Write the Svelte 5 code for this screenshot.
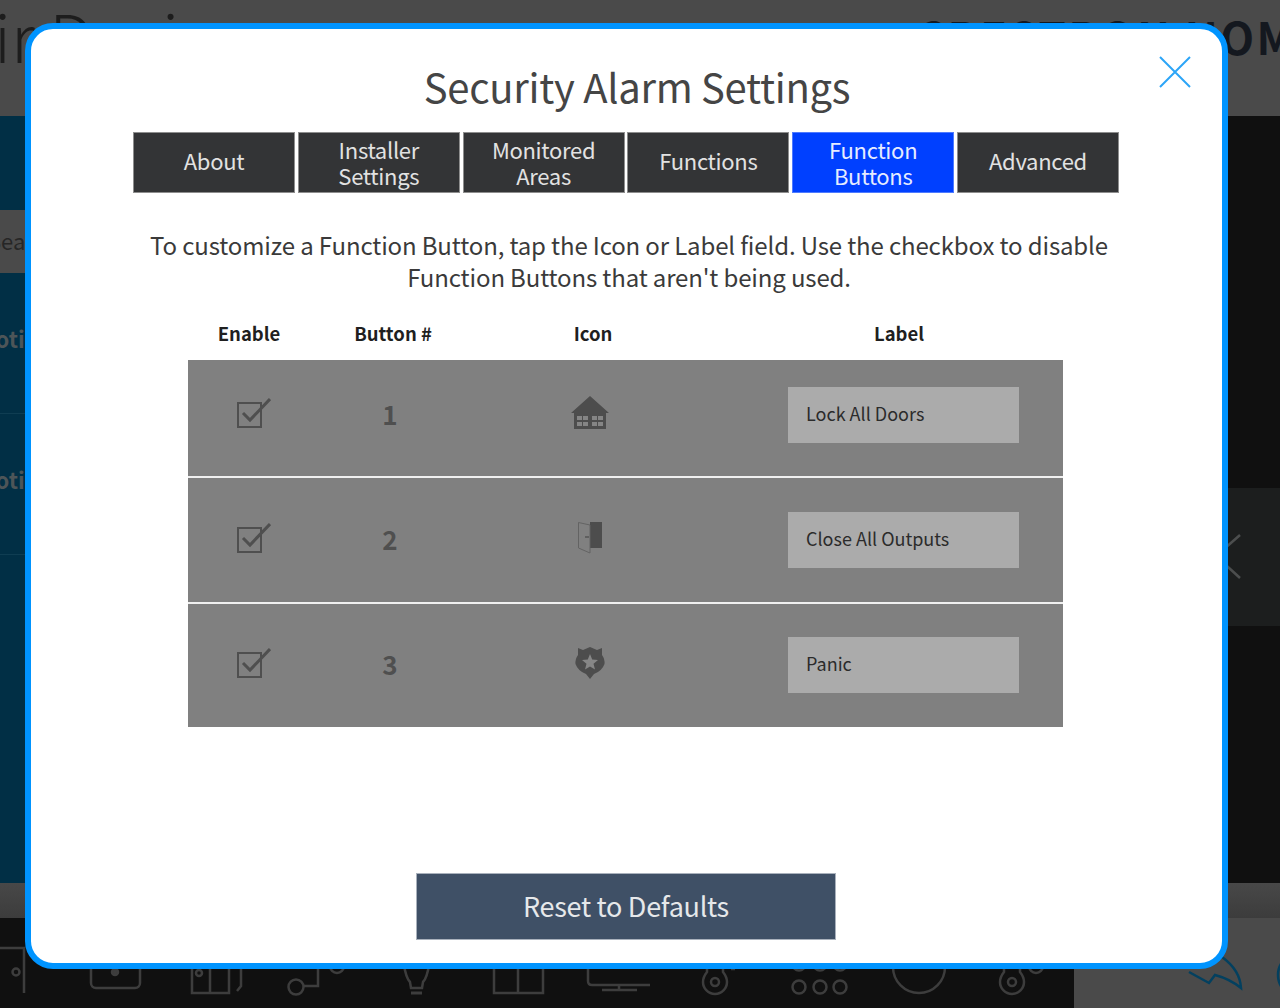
<script>
  const tabs = [
    ['About'],
    ['Installer', 'Settings'],
    ['Monitored', 'Areas'],
    ['Functions'],
    ['Function', 'Buttons'],
    ['Advanced']
  ];
  const rows = [
    { num: 1, icon: 'house', label: 'Lock All Doors' },
    { num: 2, icon: 'door', label: 'Close All Outputs' },
    { num: 3, icon: 'badge', label: 'Panic' }
  ];
</script>

<div class="page">
  <header class="top">
    <span class="heading">ir Devices</span>
    <span class="brand">CRESTRON HOME</span>
  </header>

  <div class="middle">
    <aside class="side">
      <div class="search"><span>Search</span></div>
      <div class="side-item"><span>Notices</span></div>
      <div class="side-item"><span>Notices</span></div>
    </aside>
    <div class="content">
      <div class="pager">
        <svg width="52" height="138" viewBox="0 0 52 138" fill="none" stroke="#4c4e4e" stroke-width="2.5">
          <path d="M12 47 L-12 68 L12 90" />
        </svg>
      </div>
    </div>
  </div>

  <div class="strip"></div>

  <footer class="bottom">
    <nav class="dock">
      <svg width="1074" height="90" viewBox="0 918 1074 90" fill="none" stroke="#3d3d3d" stroke-width="2.5">
        <path d="M0 948 H24 V993" /><circle cx="16" cy="972" r="3.5" />
        <rect x="91" y="950" width="49" height="38" rx="5" /><circle cx="115" cy="972" r="3" fill="#3d3d3d" />
        <path d="M192 950 V993 H229 V950 M210 950 V993 M241 960 V986 L237 991" /><circle cx="199" cy="973" r="3" />
        <circle cx="296" cy="987" r="7.5" /><path d="M304 986 H318 V960" /><circle cx="337" cy="966" r="7" />
        <path d="M404 965 Q406 978 410 982 L411 988 H422 L423 982 Q427 978 429 965" /><path d="M411 993 H422" stroke-width="3" />
        <path d="M494 950 V993 H543 V950 M518 950 V993" />
        <path d="M588 950 V981 Q588 985 592 985 H650 M619 985 V990 M602 990 H637" />
        <path d="M707 960 V972 Q703 977 703 982 A12 12 0 0 0 727 982 Q727 977 723 972 V960" /><circle cx="715" cy="982" r="4" /><path d="M731 969 H735" />
        <circle cx="799" cy="987" r="6.5" /><circle cx="820" cy="987" r="6.5" /><circle cx="840" cy="987" r="6.5" />
        <circle cx="799" cy="964" r="6.5" /><circle cx="820" cy="964" r="6.5" /><circle cx="840" cy="964" r="6.5" />
        <circle cx="919" cy="967" r="26" />
        <path d="M1004 960 V972 Q1000 977 1000 982 A12 12 0 0 0 1024 982 Q1024 977 1020 972 V960" /><circle cx="1012" cy="982" r="4" /><circle cx="1036" cy="966" r="7" />
      </svg>
    </nav>
    <div class="logo">
      <svg width="206" height="90" viewBox="1074 918 206 90" fill="none" stroke="#03405f" stroke-width="2.5">
        <path d="M1189 972 L1209 983 L1215 975 Q1230 979 1241 988 Q1240 970 1222 957" />
        <circle cx="1300" cy="975" r="22" />
      </svg>
    </div>
  </footer>

  <div class="modal">
    <button class="close" aria-label="Close">
      <svg width="32" height="32" viewBox="0 0 32 32" fill="none" stroke="#2ca5f7" stroke-width="2">
        <path d="M1 1 L31 31 M31 1 L1 31" />
      </svg>
    </button>
    <h1>Security Alarm Settings</h1>

    <div class="tabs">
      {#each tabs as tab, i}
        <div class="tab" class:active={i === 4}>
          {#each tab as line}<span>{line}</span>{/each}
        </div>
      {/each}
    </div>

    <p class="intro">
      To customize a Function Button, tap the Icon or Label field. Use the checkbox to disable<br />
      Function Buttons that aren't being used.
    </p>

    <div class="table">
      <div class="head">
        <span>Enable</span>
        <span>Button #</span>
        <span>Icon</span>
        <span class="head-label">Label</span>
      </div>
      {#each rows as row}
        <div class="row">
          <div class="cell check">
            <svg width="34" height="30" viewBox="0 0 34 30" fill="none" stroke="#4f4f4f">
              <rect x="1" y="5" width="23" height="24" stroke-width="2" />
              <path d="M6 15 L13 22 L33 1" stroke-width="3" />
            </svg>
          </div>
          <div class="cell num">{row.num}</div>
          <div class="cell icon">
            {#if row.icon === 'house'}
              <svg width="40" height="33" viewBox="0 0 40 33" fill="#4d4d4d">
                <path d="M20 0 L39 17 H36 V33 H4 V17 H1 Z" />
                <g fill="#858585">
                  <rect x="7" y="20" width="5" height="4" /><rect x="13" y="20" width="5" height="4" />
                  <rect x="7" y="26" width="5" height="4" /><rect x="13" y="26" width="5" height="4" />
                  <rect x="22" y="20" width="5" height="4" /><rect x="28" y="20" width="5" height="4" />
                  <rect x="22" y="26" width="5" height="4" /><rect x="28" y="26" width="5" height="4" />
                </g>
              </svg>
            {:else if row.icon === 'door'}
              <svg width="24" height="32" viewBox="0 0 24 32" fill="none">
                <rect x="12" y="0" width="12" height="26" fill="#4d4d4d" />
                <path d="M.5 .5 L12 3 V31 L.5 26 Z" fill="#808080" stroke="#636363" stroke-width="1" />
                <path d="M7 15 H11" stroke="#555" stroke-width="1.5" />
              </svg>
            {:else}
              <svg width="30" height="32" viewBox="0 0 30 32" fill="#4d4d4d">
                <path d="M3 1 L8 3 L15 0 L22 3 L27 1 L27 8 Q30 12 29.5 17 Q27 24 19 27 L15 32 L11 27 Q3 24 .5 17 Q0 12 3 8 Z" />
                <path fill="#878787" d="M15 7 L17.2 12.6 L23 13 L18.5 16.8 L20 22.5 L15 19.4 L10 22.5 L11.5 16.8 L7 13 L12.8 12.6 Z" />
              </svg>
            {/if}
          </div>
          <div class="cell field"><div class="input">{row.label}</div></div>
        </div>
      {/each}
    </div>

    <button class="reset">Reset to Defaults</button>
  </div>
</div>

<style>
  :global(body) {
    margin: 0;
    font-family: "Noto Sans CJK SC", "Noto Sans", sans-serif;
  }

  .page {
    position: relative;
    width: 1280px;
    height: 1008px;
    overflow: hidden;
    background: #101010;
  }

  .top {
    height: 116px;
    background: #4a4a4a;
    display: flex;
    justify-content: space-between;
    overflow: hidden;
  }

  .heading {
    font-size: 66px;
    font-weight: 300;
    line-height: 68px;
    color: #1d1d1d;
    margin-left: -6px;
  }

  .brand {
    font-size: 44px;
    font-weight: 700;
    line-height: 72px;
    letter-spacing: 2.4px;
    color: #14181f;
    white-space: nowrap;
    margin-right: -46px;
  }

  .middle {
    height: 767px;
    display: flex;
  }

  .side {
    width: 600px;
    background: #012f45;
    padding-top: 94px;
    box-sizing: border-box;
  }

  .search {
    height: 63px;
    background: #4a4a4a;
    color: #262626;
    font-size: 22px;
    line-height: 60px;
    overflow: hidden;
  }

  .search span {
    margin-left: -12px;
  }

  .side-item {
    height: 130px;
    padding-bottom: 10px;
    border-bottom: 1px solid #0f3d52;
    color: #4d5558;
    font-size: 22px;
    font-weight: 700;
    display: flex;
    align-items: center;
    overflow: hidden;
  }

  .side-item span {
    margin-left: -21px;
  }

  .content {
    flex: 1;
    padding-top: 372px;
  }

  .pager {
    height: 138px;
    background: #1c1e1e;
    display: flex;
    justify-content: flex-end;
  }

  .pager svg {
    overflow: visible;
  }

  .strip {
    height: 35px;
    background: linear-gradient(#484848, #3c3c3c);
  }

  .bottom {
    height: 90px;
    display: flex;
  }

  .dock {
    width: 1074px;
    background: #101010;
  }

  .dock svg,
  .logo svg {
    display: block;
  }

  .logo {
    flex: 1;
    background: #4a4a4a;
  }

  .modal {
    position: absolute;
    left: 25px;
    top: 23px;
    width: 1203px;
    height: 946px;
    box-sizing: border-box;
    background: #fff;
    border: 6px solid #0094ff;
    border-radius: 28px;
    padding: 29px 102px 0;
    display: flex;
    flex-direction: column;
  }

  .close {
    position: absolute;
    left: 1128px;
    top: 27px;
    padding: 0;
    border: 0;
    background: none;
    line-height: 0;
  }

  h1 {
    margin: 0;
    height: 74px;
    padding-left: 21px;
    font-size: 40px;
    font-weight: 400;
    letter-spacing: -0.3px;
    line-height: 56px;
    text-align: center;
    color: #454545;
  }

  .tabs {
    display: grid;
    grid-template-columns: repeat(6, 162px);
    column-gap: 2.8px;
  }

  .tab {
    height: 61px;
    padding-bottom: 2px;
    box-sizing: border-box;
    background: #333436;
    border: 1px solid #8e8e8e;
    color: #e2e2e2;
    font-size: 22px;
    letter-spacing: -0.3px;
    line-height: 26px;
    display: flex;
    flex-direction: column;
    align-items: center;
    justify-content: center;
  }

  .tab span:only-child {
    margin-bottom: 4px;
  }

  .tab.active {
    background: #0040ff;
    border-color: #4e7bff;
    color: #e6ecff;
  }

  .intro {
    margin: 36px 0 0;
    width: 986px;
    padding-left: 3px;
    font-size: 24px;
    letter-spacing: -0.14px;
    line-height: 32px;
    text-align: center;
    color: #3a3a3a;
    white-space: nowrap;
  }

  .table {
    width: 875px;
    margin: 24px 0 0 55px;
  }

  .head {
    display: grid;
    grid-template-columns: 122px 166px 234px 353px;
    height: 43px;
    padding-top: 4px;
    box-sizing: border-box;
    font-size: 18.5px;
    font-weight: 700;
    line-height: 24px;
    text-align: center;
    color: #1f1f1f;
  }

  .head-label {
    padding-left: 25px;
  }

  .row {
    display: grid;
    grid-template-columns: 130px 144px 256px 345px;
    height: 124px;
    background: #808080;
    border-bottom: 2px solid #f0f0f0;
  }

  .row:nth-child(2) {
    height: 109px;
    padding-bottom: 7px;
  }

  .row:last-child {
    height: 122px;
    padding-bottom: 1px;
    border-bottom: 0;
  }

  .cell {
    display: flex;
    align-items: center;
    justify-content: center;
  }

  .check svg {
    margin: 0 0 4px 2px;
  }

  .icon svg {
    margin-bottom: 5px;
  }

  .num {
    font-size: 26px;
    font-weight: 700;
    color: #4f4f4f;
    padding-bottom: 3px;
  }

  .field {
    justify-content: flex-start;
    padding-left: 70px;
  }

  .input {
    width: 231px;
    height: 56px;
    padding-left: 18px;
    box-sizing: border-box;
    background: #ababab;
    color: #2b2b2b;
    font-size: 18px;
    line-height: 52px;
  }

  .reset {
    width: 420px;
    height: 67px;
    margin: auto 0 23px 283px;
    padding: 0 0 3px;
    background: #3f5066;
    border: 1px solid #a9b1bc;
    color: #e6e8ea;
    font-family: inherit;
    font-size: 27px;
    letter-spacing: -0.3px;
  }
</style>
